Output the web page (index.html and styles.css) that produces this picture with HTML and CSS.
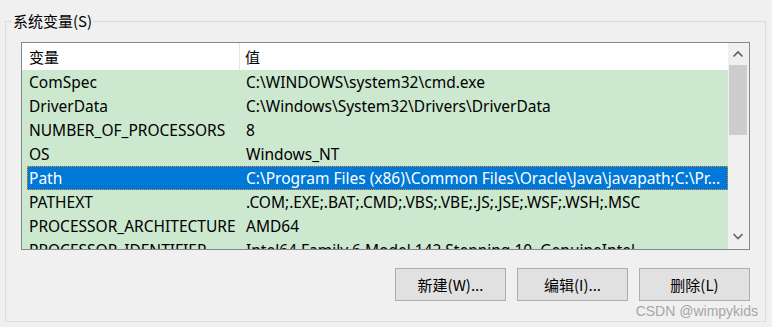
FILE: index.html
```html
<!DOCTYPE html>
<html lang="zh-CN">
  <head>
    <meta charset="UTF-8" />
    <meta name="viewport" content="width=device-width, initial-scale=1.0" />
    <title>系统变量</title>
    <link rel="stylesheet" href="styles.css">
  </head>
  <body>
    <fieldset class="group">
      <legend>系统变量(S)</legend>
      <div class="listbox">
        <div class="list">
          <div class="head">
            <div class="head-name">变量</div>
            <div class="head-value">值</div>
          </div>
          <div class="rows">
            <div class="row"><div class="cells"><span class="name">ComSpec</span><span class="value">C:\WINDOWS\system32\cmd.exe</span></div></div>
            <div class="row"><div class="cells"><span class="name">DriverData</span><span class="value">C:\Windows\System32\Drivers\DriverData</span></div></div>
            <div class="row"><div class="cells"><span class="name">NUMBER_OF_PROCESSORS</span><span class="value">8</span></div></div>
            <div class="row"><div class="cells"><span class="name">OS</span><span class="value">Windows_NT</span></div></div>
            <div class="row selected"><div class="cells"><span class="name">Path</span><span class="value">C:\Program Files (x86)\Common Files\Oracle\Java\javapath;C:\Pr...</span></div></div>
            <div class="row"><div class="cells"><span class="name">PATHEXT</span><span class="value">.COM;.EXE;.BAT;.CMD;.VBS;.VBE;.JS;.JSE;.WSF;.WSH;.MSC</span></div></div>
            <div class="row"><div class="cells"><span class="name">PROCESSOR_ARCHITECTURE</span><span class="value">AMD64</span></div></div>
            <div class="row"><div class="cells"><span class="name">PROCESSOR_IDENTIFIER</span><span class="value">Intel64 Family 6 Model 142 Stepping 10, GenuineIntel</span></div></div>
          </div>
        </div>
        <div class="scrollbar">
          <div class="arrow up">
            <svg width="21" height="22" viewBox="0 0 21 22"><path d="M5.5 13.5 L10 9 L14.5 13.5" /></svg>
          </div>
          <div class="track"><div class="thumb"></div></div>
          <div class="arrow down">
            <svg width="21" height="21" viewBox="0 0 21 21"><path d="M5.5 6 L10 10.5 L14.5 6" /></svg>
          </div>
        </div>
      </div>
      <div class="buttons">
        <button>新建(W)...</button>
        <button>编辑(I)...</button>
        <button>删除(L)</button>
      </div>
    </fieldset>
    <div class="watermark">CSDN @wimpykids</div>
  </body>
</html>
```

FILE: styles.css
```css
* {
  box-sizing: border-box;
}

body {
  margin: 0;
  height: 327px;
  position: relative;
  overflow: hidden;
  background: #f0f0f0;
  color: #000;
  font-family: "Noto Sans", "Noto Sans CJK SC", sans-serif;
  font-size: 15px;
}

.group {
  margin: 11px 6px 5px 5px;
  padding: 0 15px 20px 15px;
  border: 1px solid #dcdcdc;
  min-width: 0;
}

.group legend {
  margin-left: -9px;
  padding: 0 1px;
  height: 20px;
  line-height: 20px;
  font-family: "Noto Sans CJK SC", sans-serif;
}

.listbox {
  margin-top: 11px;
  height: 208px;
  display: flex;
  border: 1px solid #828790;
  background: #fff;
}

.list {
  flex: 1;
  min-width: 0;
  display: flex;
  flex-direction: column;
}

.head {
  height: 27px;
  display: flex;
  background: #fff;
  line-height: 27px;
  font-family: "Noto Sans CJK SC", sans-serif;
}

.head-name {
  width: 218px;
  padding-left: 7px;
  border-right: 1px solid #e5e5e5;
}

.head-value {
  padding-left: 5px;
}

.rows {
  flex: 1;
  overflow: hidden;
  background: #cce8cf;
  font-size: 15.5px;
}

.row {
  height: 24px;
  padding-left: 5px;
  display: flex;
}

.cells {
  flex: 1;
  display: flex;
  line-height: 22px;
  border: 1px solid transparent;
  white-space: nowrap;
}

.name {
  width: 212px;
  padding-left: 1px;
  overflow: hidden;
}

.value {
  flex: 1;
  padding-left: 6px;
  overflow: hidden;
  text-overflow: ellipsis;
}

.selected .cells {
  background: #0078d7;
  color: #fff;
  border: 1px dotted #f7861c;
}

.scrollbar {
  width: 21px;
  display: flex;
  flex-direction: column;
  background: #f0f0f0;
}

.arrow svg {
  display: block;
}

.arrow path {
  fill: none;
  stroke: #606060;
  stroke-width: 1.6;
}

.track {
  flex: 1;
}

.thumb {
  margin: 0 2px 0 1px;
  height: 70px;
  background: #cdcdcd;
}

.buttons {
  margin-top: 18px;
  display: flex;
  justify-content: flex-end;
  gap: 11px;
}

.buttons button {
  width: 111px;
  height: 33px;
  padding: 0;
  background: #e1e1e1;
  border: 1px solid #adadad;
  color: #000;
  font-family: "Noto Sans CJK SC", sans-serif;
  font-size: 15px;
}

.watermark {
  position: absolute;
  right: 14px;
  bottom: 8px;
  font-family: "Liberation Sans", sans-serif;
  font-size: 14px;
  line-height: 16px;
  color: #a6a6a6;
}
```
